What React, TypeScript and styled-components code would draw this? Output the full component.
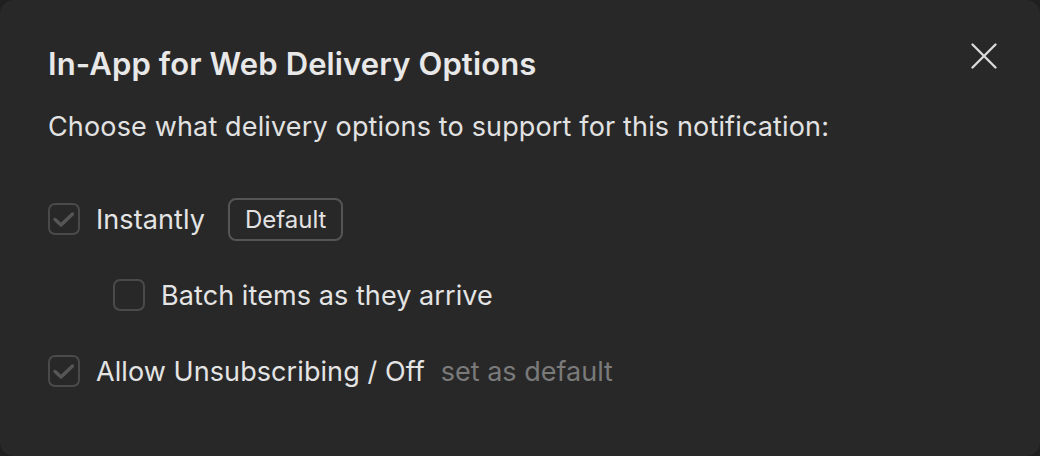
import React from 'react';
import styled, { createGlobalStyle } from 'styled-components';

const GlobalStyle = createGlobalStyle`
  html, body {
    margin: 0;
    padding: 0;
    background: #1f1f1f;
  }
  body {
    font-family: Inter, "Noto Sans", "Liberation Sans", sans-serif;
    -webkit-font-smoothing: antialiased;
  }
`;

interface OptionProps {
  label: string;
  checked?: boolean;
  indent?: boolean;
  children?: React.ReactNode;
}

const Option = ({ label, checked = false, indent = false, children }: OptionProps) => (
  <OptionRow $indent={indent}>
    <CheckBox>
      {checked && (
        <svg width="26" height="26" viewBox="0 0 26 26" fill="none">
          <path
            d="M4 13.5 L10 19 L21.5 8"
            stroke="#565656"
            strokeWidth="3.4"
            strokeLinecap="round"
            strokeLinejoin="round"
          />
        </svg>
      )}
    </CheckBox>
    <OptionLabel>{label}</OptionLabel>
    {children}
  </OptionRow>
);

const App = () => {
  return (
    <>
      <GlobalStyle />
      <Dialog>
        <Header>
          <Title>In-App for Web Delivery Options</Title>
          <CloseButton aria-label="Close">
            <svg width="26" height="26" viewBox="0 0 26 26" fill="none">
              <path d="M1.5 1.5 L24.5 24.5 M24.5 1.5 L1.5 24.5" stroke="#dcdcdc" strokeWidth="2.3" strokeLinecap="round" />
            </svg>
          </CloseButton>
        </Header>
        <Description>Choose what delivery options to support for this notification:</Description>
        <OptionList>
          <Option label="Instantly" checked>
            <Badge>Default</Badge>
          </Option>
          <Option label="Batch items as they arrive" indent />
          <Option label="Allow Unsubscribing / Off" checked>
            <MutedLink>set as default</MutedLink>
          </Option>
        </OptionList>
      </Dialog>
    </>
  );
};

export default App;

const Dialog = styled.div`
  box-sizing: border-box;
  width: 1040px;
  height: 456px;
  background: #282828;
  border-radius: 14px;
  padding: 41px 43px 0 48px;
  color: #e6e6e6;
`;

const Header = styled.div`
  display: flex;
  align-items: flex-start;
  justify-content: space-between;
`;

const Title = styled.h1`
  margin: 0;
  font-size: 31px;
  line-height: 46px;
  font-weight: 600;
  letter-spacing: 0.12px;
  color: #e8e8e8;
`;

const CloseButton = styled.button`
  display: flex;
  align-items: center;
  justify-content: center;
  width: 26px;
  height: 26px;
  padding: 0;
  margin: 2px 0 0 0;
  border: none;
  background: transparent;
  cursor: pointer;
`;

const Description = styled.p`
  margin: 21px 0 0 0;
  font-size: 27px;
  line-height: 38px;
  letter-spacing: 0.15px;
  color: #e2e2e2;
`;

const OptionList = styled.div`
  display: flex;
  flex-direction: column;
  gap: 34px;
  margin-top: 52px;
`;

const OptionRow = styled.div<{ $indent: boolean }>`
  display: flex;
  align-items: center;
  height: 42px;
  padding-left: ${(p) => (p.$indent ? '65px' : '0')};
`;

const CheckBox = styled.span`
  box-sizing: border-box;
  display: flex;
  align-items: center;
  justify-content: center;
  width: 32px;
  height: 32px;
  border: 2px solid #4a4a4a;
  border-radius: 7px;
  margin-right: 16px;
`;

const OptionLabel = styled.span`
  font-size: 27px;
  letter-spacing: 0.08px;
  color: #e4e4e4;
`;

const Badge = styled.span`
  box-sizing: border-box;
  display: inline-flex;
  align-items: center;
  height: 43px;
  margin-left: 23px;
  padding: 0 15px;
  border: 2px solid #555555;
  border-radius: 8px;
  font-size: 24px;
  color: #e2e2e2;
`;

const MutedLink = styled.span`
  margin-left: 16px;
  font-size: 27px;
  color: #7a7a7a;
`;
